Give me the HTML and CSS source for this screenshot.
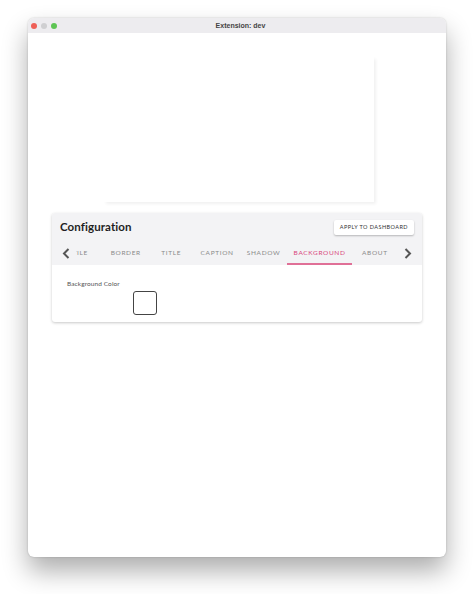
FILE: index.html
```html
<!DOCTYPE html>
<html>
<head>
<meta charset="utf-8">
<link rel="stylesheet" href="styles.css">
</head>
<body>
<div class="window">
  <div class="titlebar">
    <div class="lights">
      <span class="light red"></span>
      <span class="light gray"></span>
      <span class="light green"></span>
    </div>
    <div class="wtitle">Extension: dev</div>
  </div>
  <div class="content">
    <div class="preview"></div>
    <div class="card">
      <div class="card-head">
        <div class="title-row">
          <div class="card-title">Configuration</div>
          <button class="apply">APPLY TO DASHBOARD</button>
        </div>
        <div class="tabs">
          <div class="chev chev-left">
            <svg width="8" height="11" viewBox="0 0 8 11"><path d="M6.5 1 L2 5.5 L6.5 10" fill="none" stroke="#555" stroke-width="2"/></svg>
          </div>
          <div class="tab-viewport">
            <div class="tab-track">
              <div class="tab">TILE</div>
              <div class="tab">BORDER</div>
              <div class="tab">TITLE</div>
              <div class="tab">CAPTION</div>
              <div class="tab">SHADOW</div>
              <div class="tab active">BACKGROUND</div>
              <div class="tab">ABOUT</div>
            </div>
          </div>
          <div class="chev chev-right">
            <svg width="8" height="11" viewBox="0 0 8 11"><path d="M1.5 1 L6 5.5 L1.5 10" fill="none" stroke="#555" stroke-width="2"/></svg>
          </div>
        </div>
      </div>
      <div class="card-body">
        <div class="field-label">Background Color</div>
        <div class="swatch"></div>
      </div>
    </div>
  </div>
</div>
</body>
</html>
```
FILE: styles.css
```css
* { box-sizing: border-box; }
html, body { margin: 0; padding: 0; background: #ffffff; }
body {
  font-family: Lato, "Noto Sans", sans-serif;
  padding: 18px 28px 0 28px;
  height: 594px;
}
.window {
  width: 418px;
  height: 539px;
  background: #fff;
  border-radius: 6px;
  box-shadow: 0 14px 26px rgba(0,0,0,0.32), 0 0 2px rgba(0,0,0,0.22);
  overflow: hidden;
  display: flex;
  flex-direction: column;
}
.titlebar {
  height: 15px;
  background: #edecef;
  display: flex;
  align-items: center;
  flex: 0 0 auto;
}
.lights {
  display: flex;
  gap: 4px;
  padding-left: 3px;
}
.light {
  width: 6px; height: 6px; border-radius: 50%;
  display: block;
}
.red { background: #ee5f57; }
.gray { background: #cfcfd1; }
.green { background: #5ec554; }
.wtitle {
  flex: 1;
  text-align: center;
  font-family: "Liberation Sans", Arial, sans-serif;
  font-size: 7px;
  font-weight: bold;
  color: #444444;
  margin-right: 22px;
}
.content {
  flex: 1;
  display: flex;
  flex-direction: column;
  padding-top: 24px;
}
.preview {
  width: 270px;
  height: 145px;
  margin-left: 76px;
  background: #fff;
  box-shadow: 2px 2px 3px rgba(0,0,0,0.06);
}
.card {
  margin: 11px 0 0 24px;
  width: 370px;
  height: 109px;
  border-radius: 3px;
  background: #fff;
  box-shadow: 0 1px 3px rgba(0,0,0,0.22);
  overflow: hidden;
}
.card-head {
  background: #f3f3f5;
}
.title-row {
  height: 30px;
  display: flex;
  align-items: center;
  justify-content: space-between;
  padding: 0 8px 4px 8px;
}
.card-title {
  font-size: 11.5px;
  font-weight: 700;
  color: #1f1f1f;
  letter-spacing: 0.1px;
}
.apply {
  height: 15px;
  padding: 0 6px;
  border: none;
  border-radius: 2px;
  background: #fff;
  box-shadow: 0 1px 2px rgba(0,0,0,0.25);
  font-family: Lato, sans-serif;
  font-size: 5.5px;
  letter-spacing: 0.45px;
  color: #333;
  margin-top: 2px;
}
.tabs {
  height: 22px;
  display: flex;
  align-items: stretch;
}
.chev {
  display: flex;
  align-items: center;
  justify-content: center;
  flex: 0 0 auto;
  padding-bottom: 2px;
}
.chev-left { width: 24px; padding-left: 4px; }
.chev-right { width: 28px; }
.tab-viewport {
  flex: 1;
  overflow: hidden;
}
.tab-track {
  display: flex;
  height: 100%;
  margin-left: -18.5px;
}
.tab {
  flex: 0 0 auto;
  min-width: 45.5px;
  display: flex;
  align-items: center;
  justify-content: center;
  padding: 0 6.6px 2px 6.6px;
  font-size: 6.5px;
  letter-spacing: 0.65px;
  color: #8a8a8a;
  border-bottom: 2px solid transparent;
}
.tab.active {
  color: #d9477c;
  border-bottom-color: #e07097;
}
.card-body {
  padding: 15px 0 0 15px;
}
.field-label {
  font-size: 6.5px;
  color: #555;
  letter-spacing: 0.1px;
}
.swatch {
  width: 24px;
  height: 24px;
  margin: 4px 0 0 66px;
  border: 1.5px solid #444;
  border-radius: 3px;
  background: #fff;
}
```
